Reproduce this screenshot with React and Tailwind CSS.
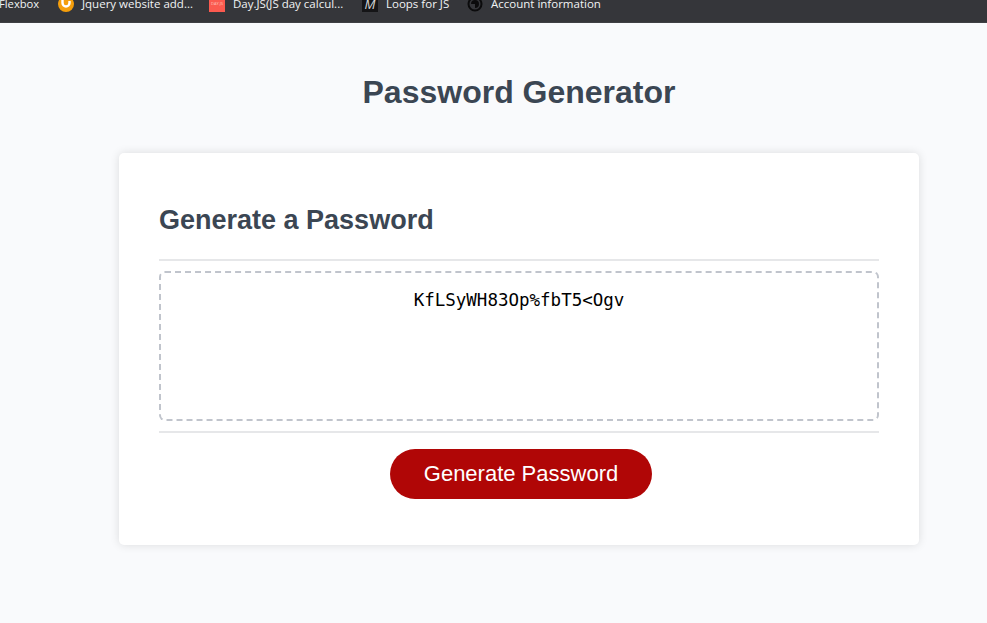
const Bookmark = ({ icon, label, className = "" }) => (
  <div className={`flex items-center gap-2 shrink-0 ${className}`}>
    {icon}
    <span className="whitespace-nowrap">{label}</span>
  </div>
);

const JqueryIcon = () => (
  <svg width="16" height="16" viewBox="0 0 16 16">
    <circle cx="8" cy="8" r="8" fill="#f59e0b" />
    <path d="M4.5 3v4a3.5 3.5 0 0 0 7 0V5" fill="none" stroke="#fff" strokeWidth="2.4" />
  </svg>
);

const DayjsIcon = () => (
  <div className="w-4 h-4 bg-[#fb5a4f] flex items-center justify-center text-[4px] leading-none text-[#ffc4bd]">
    DAY.JS
  </div>
);

const MediumIcon = () => (
  <div className="w-4 h-4 bg-[#151517] flex items-center justify-center text-[13px] leading-none italic text-[#d8d8d8]">
    M
  </div>
);

const SpiralIcon = () => (
  <svg width="16" height="16" viewBox="0 0 16 16" fill="none" stroke="#0b0b0c" strokeWidth="2">
    <circle cx="8" cy="8" r="6.5" />
    <path d="M8 11a3 3 0 1 0-3-3M8 9a1 1 0 1 0-1-1" />
  </svg>
);

const App = () => {
  return (
    <div className="h-[623px] overflow-hidden bg-[#f9fafc] font-['Liberation_Sans',Arial,sans-serif]">
      <div className="h-[23px] overflow-hidden bg-[#35363a] border-b border-[#3f4044]">
        <div className="flex items-center -mt-[4px] -ml-[2px] h-[16px] text-[11.5px] text-[#f1f3f4] font-['Open_Sans','Liberation_Sans',sans-serif]">
          <span className="w-[59px] ml-[1px] shrink-0 whitespace-nowrap text-[11.2px]">Flexbox</span>
          <Bookmark icon={<JqueryIcon />} label="Jquery website add..." className="w-[151px]" />
          <Bookmark icon={<DayjsIcon />} label="Day.JS(JS day calcul..." className="w-[153px]" />
          <Bookmark icon={<MediumIcon />} label="Loops for JS" className="w-[105px]" />
          <Bookmark icon={<SpiralIcon />} label="Account information" />
        </div>
      </div>

      <div className="w-[800px] ml-[119px]">
        <h1 className="pt-[51px] h-[130px] text-center text-[32px] leading-[37px] font-bold text-[#3b4653]">
          Password Generator
        </h1>

        <div className="h-[392px] bg-white rounded-[5px] shadow-[0_0_10px_rgba(0,0,0,0.12)] px-10 pt-[51px]">
          <h2 className="h-[55px] text-[27px] leading-[32px] font-bold text-[#3b4653]">Generate a Password</h2>
          <div className="border-y-2 border-[#e6e7e9] pt-[10px] pb-[10px]">
            <div className="h-[150px] rounded-[6px] border-2 border-dashed border-[#c0c4cc] pt-[17px] text-center font-['DejaVu_Sans_Mono',monospace] text-[17.5px] leading-[20px] text-black">
              KfLSyWH83Op%fbT5&lt;Ogv
            </div>
          </div>
          <div className="flex justify-center pt-[16px] pl-[4px]">
            <button className="w-[262px] h-[50px] pb-[2px] rounded-full bg-[#b00606] text-white text-[22px]">
              Generate Password
            </button>
          </div>
        </div>
      </div>
    </div>
  );
};

export default App;
